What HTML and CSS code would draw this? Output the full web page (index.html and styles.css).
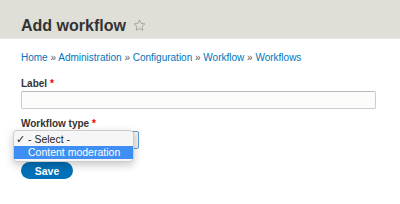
FILE: index.html
```html
<!DOCTYPE html>
<html lang="en">

<head>
    <meta charset="UTF-8">
    <title>Add workflow</title>
    <link rel="stylesheet" href="styles.css">
</head>

<body>
    <div class="header">
        <h1 class="title">Add workflow
            <svg class="star" width="13" height="13" viewBox="0 0 24 24">
                <path d="M12 1.8l3 6.4 7 .8-5.2 4.8 1.4 7-6.2-3.5-6.2 3.5 1.4-7L1.9 9l7-.8z" fill="none" stroke="#9a9a90" stroke-width="1.5" stroke-linejoin="round"/>
            </svg>
        </h1>
    </div>

    <div class="content">
        <div class="breadcrumb">
            <a href="#">Home</a> » <a href="#">Administration</a> » <a href="#">Configuration</a> » <a href="#">Workflow</a> » <a href="#">Workflows</a>
        </div>

        <div class="field">
            <label>Label <span class="req">*</span></label>
            <div class="text-input"></div>
        </div>

        <div class="field select-field">
            <label>Workflow type <span class="req">*</span></label>
            <div class="select-box"></div>
            <div class="dropdown">
                <div class="option"><span class="check">✓</span>- Select -</div>
                <div class="option active">Content moderation</div>
            </div>
        </div>

        <button class="save">Save</button>
    </div>
</body>

</html>
```

FILE: styles.css
```css
body {
    margin: 0;
    font-family: "Liberation Sans", Arial, sans-serif;
    background-color: #fff;
    color: #333;
}

.header {
    background-color: #dfdfd7;
    height: 39px;
    padding: 0 21px;
    border-bottom: 1px solid #e9e9e4;
    box-sizing: border-box;
}

.title {
    margin: 0;
    padding-top: 16px;
    font-size: 16px;
    font-weight: bold;
    color: #333;
    line-height: 20px;
    display: flex;
    align-items: flex-start;
    gap: 7px;
}

.star {
    margin-top: 3px;
}

.content {
    padding: 12px 21px 0;
}

.breadcrumb {
    font-size: 10px;
    line-height: 14px;
    color: #555;
}

.breadcrumb a {
    color: #0074bd;
    text-decoration: none;
}

.field {
    margin-top: 12px;
}

.field label {
    display: block;
    font-size: 10px;
    font-weight: bold;
    line-height: 14px;
    color: #333;
}

.req {
    color: #e00;
}

.text-input {
    height: 18px;
    width: 355px;
    border: 1px solid #ccc;
    border-top-color: #b8b8b8;
    border-radius: 2px;
    background-color: #fcfcfa;
    box-sizing: border-box;
}

.select-field {
    position: relative;
    margin-top: 8px;
}

.select-box {
    height: 18px;
    width: 118px;
    border: 1px solid #5b9dd9;
    border-radius: 2px;
    background-color: #f2f1eb;
    box-sizing: border-box;
}

.dropdown {
    position: absolute;
    left: -8px;
    top: 13px;
    width: 121px;
    padding: 1px 0 2px;
    background-color: #f6f6f6;
    border: 1px solid #cdcdcd;
    border-radius: 4px;
    box-sizing: border-box;
    box-shadow: 0 3px 9px rgba(0, 0, 0, 0.22);
    font-size: 10.5px;
    color: #222;
}

.option {
    height: 14px;
    line-height: 14px;
    padding-left: 14px;
    position: relative;
}

.option.active {
    height: 13px;
    line-height: 13px;
    background-color: #3f8ef3;
    color: #fff;
}

.check {
    position: absolute;
    left: 2px;
}

.save {
    margin-top: 13px;
    width: 52px;
    height: 17px;
    border: none;
    border-radius: 9px;
    background-color: #0071b8;
    color: #fff;
    font-family: "Liberation Sans", Arial, sans-serif;
    font-weight: bold;
    font-size: 10.5px;
    padding: 0;
}
```
